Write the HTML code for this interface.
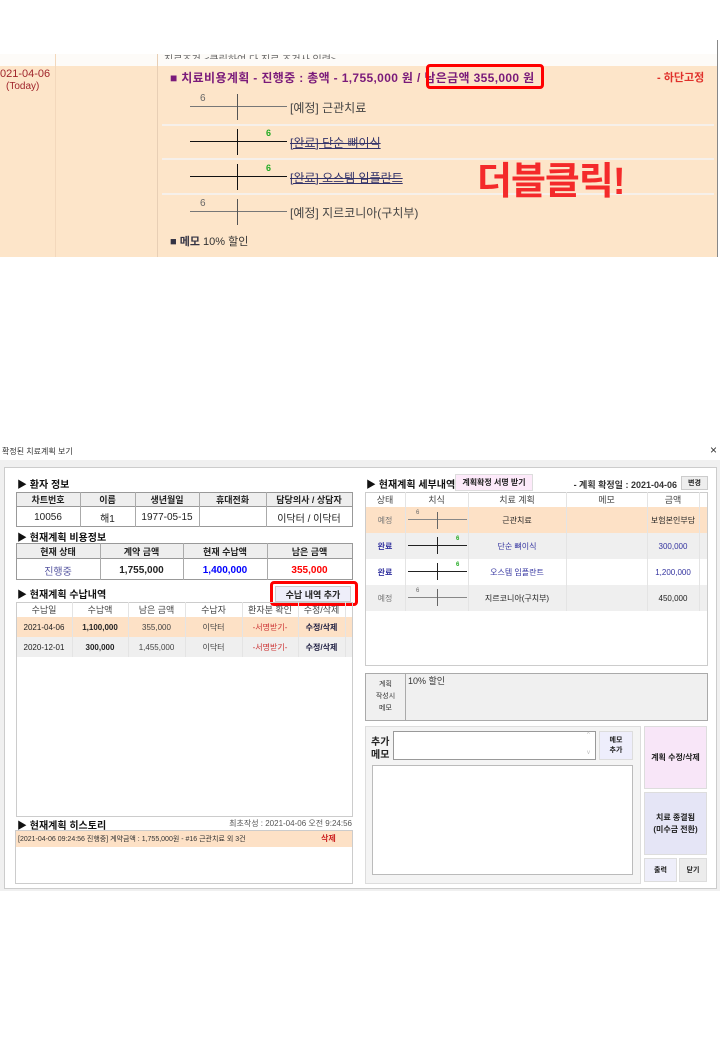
<!DOCTYPE html>
<html><head><meta charset="utf-8"><style>
*{margin:0;padding:0;box-sizing:border-box}
body{width:720px;height:1040px;background:#fff;position:relative;overflow:hidden;font-family:"Liberation Sans","Noto Sans CJK KR",sans-serif;color:#222}
.a{position:absolute;white-space:nowrap}
.c{position:absolute;display:flex;align-items:center;justify-content:center;text-align:center;white-space:nowrap}
.hl{position:absolute;height:1px;background:#333}
.vl{position:absolute;width:1px;background:#333}
.t{font-size:9px}
.b{font-weight:bold}
.sec{font-size:10px;font-weight:bold;color:#111}
</style></head><body>
<!-- top section -->
<div class="a" style="left:0;top:54px;width:718px;height:12px;background:#fdfbf8"></div>
<div class="a" style="left:0;top:66px;width:718px;height:191px;background:#fde5c9"></div>
<div class="vl" style="left:55px;top:54px;height:203px;background:#f3d8bc"></div>
<div class="vl" style="left:157px;top:54px;height:203px;background:#e8cfb5"></div>
<div class="vl" style="left:717px;top:40px;height:217px;background:#888"></div>
<div class="a" style="left:164px;top:51px;font-size:10px;color:#666;height:8px;overflow:hidden">진료조건 &lt;클릭하여 다 진료 조건사 입력&gt;</div>
<div class="a" style="left:0;top:68px;font-size:11px;color:#a0252c">021-04-06</div>
<div class="a" style="left:6px;top:81px;font-size:10px;color:#a0252c">(Today)</div>
<div class="a" style="left:170px;top:69px;font-size:12px;font-weight:bold;color:#7a1a7a;letter-spacing:0.35px">■ 치료비용계획 - 진행중 : 총액 - 1,755,000 원 / 남은금액 355,000 원</div>
<div class="a" style="left:426px;top:64px;width:118px;height:25px;border:3px solid #f00;border-radius:4px"></div>
<div class="a" style="left:657px;top:69px;font-size:11px;font-weight:bold;color:#e0302a">- 하단고정</div>
<div class="hl" style="left:162px;top:124px;width:552px;background:#f6f0ea;height:2px"></div>
<div class="hl" style="left:162px;top:158px;width:552px;background:#f6f0ea;height:2px"></div>
<div class="hl" style="left:162px;top:193px;width:552px;background:#f6f0ea;height:2px"></div>
<!-- row1 -->
<div class="hl" style="left:190px;top:106px;width:97px;background:#777"></div>
<div class="vl" style="left:237px;top:94px;height:26px;background:#555"></div>
<div class="a" style="left:200px;top:93px;font-size:10px;color:#666">6</div>
<div class="a" style="left:290px;top:99px;font-size:12px;color:#444">[예정] 근관치료</div>
<!-- row2 -->
<div class="hl" style="left:190px;top:141px;width:97px;background:#111"></div>
<div class="vl" style="left:237px;top:129px;height:26px;background:#111"></div>
<div class="a" style="left:266px;top:128px;font-size:9px;color:#2a2;font-weight:bold">6</div>
<div class="a" style="left:290px;top:134px;font-size:12px;color:#33336a;text-decoration:line-through underline">[완료] 단순 뼈이식</div>
<!-- row3 -->
<div class="hl" style="left:190px;top:176px;width:97px;background:#111"></div>
<div class="vl" style="left:237px;top:164px;height:26px;background:#111"></div>
<div class="a" style="left:266px;top:163px;font-size:9px;color:#2a2;font-weight:bold">6</div>
<div class="a" style="left:290px;top:169px;font-size:12px;color:#33336a;text-decoration:line-through underline">[완료] 오스템 임플란트</div>
<!-- row4 -->
<div class="hl" style="left:190px;top:211px;width:97px;background:#777"></div>
<div class="vl" style="left:237px;top:199px;height:26px;background:#555"></div>
<div class="a" style="left:200px;top:198px;font-size:10px;color:#666">6</div>
<div class="a" style="left:290px;top:204px;font-size:12px;color:#444">[예정] 지르코니아(구치부)</div>
<div class="a" style="left:170px;top:233px;font-size:11px;color:#333"><b style="color:#334">■ 메모</b> 10% 할인</div>
<div class="a" style="left:477px;top:150px;font-size:38px;font-weight:bold;color:#f42a2a;letter-spacing:-1px">더블클릭!</div>

<!-- dialog -->
<div class="a" style="left:2px;top:446px;font-size:8px;color:#333">확정된 치료계획 보기</div>
<div class="a" style="left:710px;top:443px;font-size:12px;color:#333">×</div>
<div class="a" style="left:0;top:460px;width:720px;height:431px;background:#f0f0f0"></div>
<div class="a" style="left:4px;top:467px;width:713px;height:422px;background:#fff;border:1px solid #ccc"></div>

<!-- patient info -->
<div class="a sec" style="left:17px;top:476px">▶ 환자 정보</div>
<div class="a" style="left:16px;top:492px;width:337px;height:35px;border:1px solid #999"></div>
<div class="a" style="left:17px;top:493px;width:335px;height:14px;background:#eee;border-bottom:1px solid #999"></div>
<div class="c t b" style="left:16px;top:492px;width:64px;height:15px">차트번호</div>
<div class="c t b" style="left:80px;top:492px;width:55px;height:15px">이름</div>
<div class="c t b" style="left:135px;top:492px;width:64px;height:15px">생년월일</div>
<div class="c t b" style="left:199px;top:492px;width:67px;height:15px">휴대전화</div>
<div class="c t b" style="left:266px;top:492px;width:86px;height:15px">담당의사 / 상담자</div>
<div class="c" style="left:16px;top:508px;width:64px;height:19px;font-size:10px">10056</div>
<div class="c" style="left:80px;top:508px;width:55px;height:19px;font-size:10px">해1</div>
<div class="c" style="left:135px;top:508px;width:64px;height:19px;font-size:10px">1977-05-15</div>
<div class="c" style="left:266px;top:508px;width:86px;height:19px;font-size:10px">이닥터 / 이닥터</div>
<div class="vl" style="left:80px;top:492px;height:35px;background:#aaa"></div>
<div class="vl" style="left:135px;top:492px;height:35px;background:#aaa"></div>
<div class="vl" style="left:199px;top:492px;height:35px;background:#aaa"></div>
<div class="vl" style="left:266px;top:492px;height:35px;background:#aaa"></div>

<div class="a sec" style="left:17px;top:529px">▶ 현재계획 비용정보</div>
<div class="a" style="left:16px;top:543px;width:337px;height:37px;border:1px solid #999"></div>
<div class="a" style="left:17px;top:544px;width:335px;height:15px;background:#eee;border-bottom:1px solid #999"></div>
<div class="c t b" style="left:16px;top:543px;width:84px;height:16px">현재 상태</div>
<div class="c t b" style="left:100px;top:543px;width:83px;height:16px">계약 금액</div>
<div class="c t b" style="left:183px;top:543px;width:84px;height:16px">현재 수납액</div>
<div class="c t b" style="left:267px;top:543px;width:85px;height:16px">남은 금액</div>
<div class="c" style="left:16px;top:560px;width:84px;height:20px;font-size:10px;color:#5555a0">진행중</div>
<div class="c b" style="left:100px;top:560px;width:83px;height:20px;font-size:10px">1,755,000</div>
<div class="c b" style="left:183px;top:560px;width:84px;height:20px;font-size:10px;color:#00f">1,400,000</div>
<div class="c b" style="left:267px;top:560px;width:85px;height:20px;font-size:10px;color:#f00">355,000</div>
<div class="vl" style="left:100px;top:543px;height:37px;background:#aaa"></div>
<div class="vl" style="left:183px;top:543px;height:37px;background:#aaa"></div>
<div class="vl" style="left:267px;top:543px;height:37px;background:#aaa"></div>

<div class="a sec" style="left:17px;top:586px">▶ 현재계획 수납내역</div>
<div class="c t b" style="left:275px;top:586px;width:76px;height:16px;background:#eeeefa;border:1px solid #ccc">수납 내역 추가</div>
<div class="a" style="left:270px;top:581px;width:88px;height:25px;border:3px solid #f00;border-radius:4px"></div>
<div class="a" style="left:16px;top:602px;width:337px;height:215px;border:1px solid #ccc"></div>
<div class="a" style="left:17px;top:617px;width:335px;height:20px;background:#fde1c6"></div>
<div class="a" style="left:17px;top:637px;width:335px;height:20px;background:#efefef"></div>
<div class="c t" style="left:16px;top:602px;width:56px;height:15px;color:#444">수납일</div>
<div class="c t" style="left:72px;top:602px;width:56px;height:15px;color:#444">수납액</div>
<div class="c t" style="left:128px;top:602px;width:57px;height:15px;color:#444">남은 금액</div>
<div class="c t" style="left:185px;top:602px;width:57px;height:15px;color:#444">수납자</div>
<div class="c t" style="left:242px;top:602px;width:56px;height:15px;color:#444">환자분 확인</div>
<div class="c t" style="left:298px;top:602px;width:47px;height:15px;color:#444">수정/삭제</div>
<div class="c" style="left:16px;top:617px;width:56px;height:20px;font-size:8px">2021-04-06</div>
<div class="c b" style="left:72px;top:617px;width:56px;height:20px;font-size:8px">1,100,000</div>
<div class="c" style="left:128px;top:617px;width:57px;height:20px;font-size:8px;color:#444">355,000</div>
<div class="c" style="left:185px;top:617px;width:57px;height:20px;font-size:8px;color:#444">이닥터</div>
<div class="c" style="left:242px;top:617px;width:56px;height:20px;font-size:8px;color:#c33">-서명받기-</div>
<div class="c b" style="left:298px;top:617px;width:47px;height:20px;font-size:8px;color:#224">수정/삭제</div>
<div class="c" style="left:16px;top:637px;width:56px;height:20px;font-size:8px">2020-12-01</div>
<div class="c b" style="left:72px;top:637px;width:56px;height:20px;font-size:8px">300,000</div>
<div class="c" style="left:128px;top:637px;width:57px;height:20px;font-size:8px;color:#444">1,455,000</div>
<div class="c" style="left:185px;top:637px;width:57px;height:20px;font-size:8px;color:#444">이닥터</div>
<div class="c" style="left:242px;top:637px;width:56px;height:20px;font-size:8px;color:#c33">-서명받기-</div>
<div class="c b" style="left:298px;top:637px;width:47px;height:20px;font-size:8px;color:#224">수정/삭제</div>
<div class="vl" style="left:72px;top:602px;height:55px;background:#e4e4e4"></div>
<div class="vl" style="left:128px;top:602px;height:55px;background:#e4e4e4"></div>
<div class="vl" style="left:185px;top:602px;height:55px;background:#e4e4e4"></div>
<div class="vl" style="left:242px;top:602px;height:55px;background:#e4e4e4"></div>
<div class="vl" style="left:298px;top:602px;height:55px;background:#e4e4e4"></div>
<div class="vl" style="left:345px;top:602px;height:55px;background:#e4e4e4"></div>

<div class="a sec" style="left:17px;top:817px">▶ 현재계획 히스토리</div>
<div class="a" style="right:368px;top:818px;font-size:8px;color:#555">최초작성 : 2021-04-06 오전 9:24:56</div>
<div class="a" style="left:15px;top:830px;width:338px;height:54px;border:1px solid #ccc"></div>
<div class="a" style="left:16px;top:831px;width:336px;height:16px;background:#fde1c6"></div>
<div class="a" style="left:18px;top:834px;font-size:7px;color:#333">[2021-04-06 09:24:56 진행중] 계약금액 : 1,755,000원 - #16 근관치료 외 3건</div>
<div class="a" style="left:321px;top:833px;font-size:8px;color:#c22;font-weight:bold">삭제</div>

<!-- right -->
<div class="a sec" style="left:366px;top:476px">▶ 현재계획 세부내역</div>
<div class="c b" style="left:455px;top:474px;width:78px;height:17px;background:#fdeafa;border:1px solid #ddd;font-size:8px">계획확정 서명 받기</div>
<div class="a b" style="right:43px;top:478px;font-size:9px;color:#333">- 계획 확정일 : 2021-04-06</div>
<div class="c b" style="left:681px;top:476px;width:27px;height:14px;background:#eee;border:1px solid #ccc;font-size:7px">변경</div>
<div class="a" style="left:365px;top:492px;width:343px;height:174px;border:1px solid #ccc"></div>
<div class="a" style="left:366px;top:507px;width:341px;height:26px;background:#fde1c6"></div>
<div class="a" style="left:366px;top:533px;width:341px;height:26px;background:#efefef"></div>
<div class="a" style="left:366px;top:585px;width:341px;height:26px;background:#efefef"></div>
<div class="c t" style="left:365px;top:492px;width:40px;height:15px;color:#444">상태</div>
<div class="c t" style="left:405px;top:492px;width:63px;height:15px;color:#444">치식</div>
<div class="c t" style="left:468px;top:492px;width:98px;height:15px;color:#444">치료 계획</div>
<div class="c t" style="left:566px;top:492px;width:81px;height:15px;color:#444">메모</div>
<div class="c t" style="left:647px;top:492px;width:52px;height:15px;color:#444">금액</div>
<div class="vl" style="left:405px;top:492px;height:119px;background:#e4e4e4"></div>
<div class="vl" style="left:468px;top:492px;height:119px;background:#e4e4e4"></div>
<div class="vl" style="left:566px;top:492px;height:119px;background:#e4e4e4"></div>
<div class="vl" style="left:647px;top:492px;height:119px;background:#e4e4e4"></div>
<div class="vl" style="left:699px;top:492px;height:119px;background:#e4e4e4"></div>
<!-- rows -->
<div class="c" style="left:365px;top:507px;width:40px;height:26px;font-size:8px;color:#777">예정</div>
<div class="c" style="left:468px;top:507px;width:98px;height:26px;font-size:8px">근관치료</div>
<div class="c" style="left:647px;top:507px;width:52px;height:26px;font-size:8px">보험본인부담</div>
<div class="hl" style="left:408px;top:519px;width:59px;background:#888"></div><div class="vl" style="left:437px;top:512px;height:17px;background:#666"></div><div class="a" style="left:416px;top:510px;font-size:6px;color:#666">6</div>
<div class="c b" style="left:365px;top:533px;width:40px;height:26px;font-size:8px;color:#3535a0">완료</div>
<div class="c" style="left:468px;top:533px;width:98px;height:26px;font-size:8px;color:#3535a0">단순 뼈이식</div>
<div class="c" style="left:647px;top:533px;width:52px;height:26px;font-size:8px;color:#3535a0">300,000</div>
<div class="hl" style="left:408px;top:545px;width:59px;background:#222"></div><div class="vl" style="left:437px;top:537px;height:17px;background:#222"></div><div class="a" style="left:456px;top:536px;font-size:6px;color:#2a2;font-weight:bold">6</div>
<div class="c b" style="left:365px;top:559px;width:40px;height:26px;font-size:8px;color:#3535a0">완료</div>
<div class="c" style="left:468px;top:559px;width:98px;height:26px;font-size:8px;color:#3535a0">오스템 임플란트</div>
<div class="c" style="left:647px;top:559px;width:52px;height:26px;font-size:8px;color:#3535a0">1,200,000</div>
<div class="hl" style="left:408px;top:571px;width:59px;background:#222"></div><div class="vl" style="left:437px;top:563px;height:17px;background:#222"></div><div class="a" style="left:456px;top:562px;font-size:6px;color:#2a2;font-weight:bold">6</div>
<div class="c" style="left:365px;top:585px;width:40px;height:26px;font-size:8px;color:#777">예정</div>
<div class="c" style="left:468px;top:585px;width:98px;height:26px;font-size:8px">지르코니아(구치부)</div>
<div class="c" style="left:647px;top:585px;width:52px;height:26px;font-size:8px">450,000</div>
<div class="hl" style="left:408px;top:597px;width:59px;background:#888"></div><div class="vl" style="left:437px;top:589px;height:17px;background:#666"></div><div class="a" style="left:416px;top:588px;font-size:6px;color:#666">6</div>

<!-- memo -->
<div class="a" style="left:365px;top:673px;width:343px;height:48px;background:#f0f0f0;border:1px solid #aaa"></div>
<div class="vl" style="left:405px;top:673px;height:48px;background:#aaa"></div>
<div class="c" style="left:366px;top:674px;width:39px;height:46px;font-size:7px;color:#333;white-space:normal;line-height:12px">계획<br>작성시<br>메모</div>
<div class="a" style="left:408px;top:674px;font-size:9px;color:#333">10% 할인</div>

<div class="a" style="left:365px;top:726px;width:276px;height:158px;background:#f4f4f4;border:1px solid #ddd"></div>
<div class="a b" style="left:371px;top:736px;font-size:10px;line-height:13px">추가<br>메모</div>
<div class="a" style="left:393px;top:731px;width:203px;height:29px;background:#fff;border:1px solid #999"></div>
<div class="a" style="left:587px;top:732px;font-size:6px;color:#bbb">^</div>
<div class="a" style="left:587px;top:750px;font-size:6px;color:#bbb">v</div>
<div class="c b" style="left:599px;top:731px;width:34px;height:29px;background:#eeeefc;border:1px solid #ddd;font-size:7px;line-height:10px;white-space:normal">메모<br>추가</div>
<div class="a" style="left:372px;top:765px;width:261px;height:110px;background:#fff;border:1px solid #bbb"></div>
<div class="c b" style="left:644px;top:726px;width:63px;height:63px;background:#f8e6f8;border:1px solid #ddd;font-size:8px">계획 수정/삭제</div>
<div class="c b" style="left:644px;top:792px;width:63px;height:63px;background:#e5e5f6;border:1px solid #ddd;font-size:8px;line-height:12px;white-space:normal">치료 종결됨<br>(미수금 전환)</div>
<div class="c b" style="left:644px;top:858px;width:33px;height:24px;background:#eeeefa;border:1px solid #ddd;font-size:7px">출력</div>
<div class="c b" style="left:679px;top:858px;width:28px;height:24px;background:#ececec;border:1px solid #ddd;font-size:7px">닫기</div>
</body></html>
